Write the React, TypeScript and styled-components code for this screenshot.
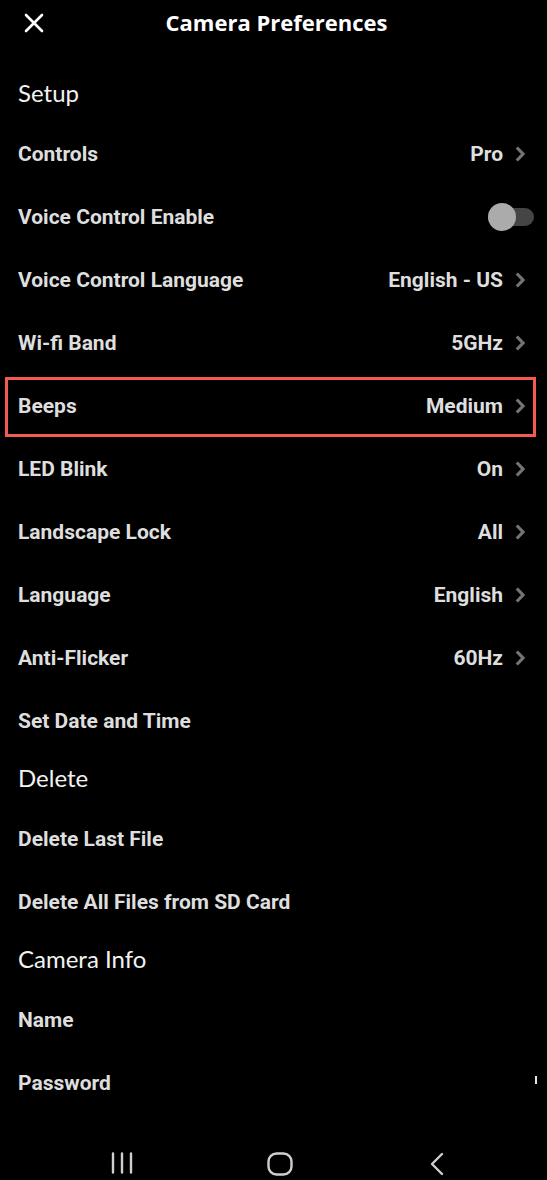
import React from "react";
import styled, { createGlobalStyle } from "styled-components";

const GlobalStyle = createGlobalStyle`
  html, body {
    margin: 0;
    padding: 0;
    background: #000;
  }
  * {
    box-sizing: border-box;
  }
`;

const Screen = styled.div`
  width: 547px;
  height: 1180px;
  background: #000;
  display: flex;
  flex-direction: column;
  overflow: hidden;
`;

const TopBar = styled.header`
  height: 45px;
  display: grid;
  grid-template-columns: 60px 1fr 60px;
  align-items: center;
`;

const CloseButton = styled.button`
  border: none;
  background: none;
  padding: 0 0 0 24px;
  height: 45px;
  display: flex;
  align-items: center;
  cursor: pointer;
`;

const Title = styled.h1`
  margin: 0;
  text-align: center;
  color: #fff;
  font-family: "Open Sans", Lato, sans-serif;
  font-weight: 700;
  font-size: 22px;
  padding-left: 6px;
  padding-bottom: 2px;
`;

const List = styled.div`
  padding-top: 22.5px;
  display: flex;
  flex-direction: column;
`;

const SectionHeader = styled.div`
  height: 55px;
  padding: 10px 18px 0;
  color: #f2f2f2;
  font-family: Lato, "Noto Sans", sans-serif;
  font-size: 24px;
  line-height: 30px;
`;

const Row = styled.div<{ $highlight?: boolean }>`
  position: relative;
  height: 63px;
  padding: 0 22px 0 18px;
  display: flex;
  align-items: center;
  justify-content: space-between;
  font-family: Roboto, "Liberation Sans", sans-serif;
  font-weight: 700;
  font-size: 21px;
  color: #dedede;

  ${(p) =>
    p.$highlight &&
    `
    &::after {
      content: "";
      position: absolute;
      top: 2.5px;
      left: 5px;
      right: 11px;
      bottom: 0.5px;
      border: 3px solid #f45b50;
      pointer-events: none;
    }
  `}
`;

const Value = styled.div`
  display: flex;
  align-items: center;
  gap: 12px;
`;

const Chevron = () => (
  <svg width="10" height="16" viewBox="0 0 10 16">
    <path
      d="M1.8 1.5 L8 8 L1.8 14.5"
      fill="none"
      stroke="#747474"
      strokeWidth="3.2"
    />
  </svg>
);

const Track = styled.div`
  position: relative;
  width: 46px;
  height: 18px;
  border-radius: 9px;
  background: #454545;
  margin-right: -9px;
`;

const Knob = styled.div`
  position: absolute;
  left: 0;
  top: -5px;
  width: 28px;
  height: 28px;
  border-radius: 50%;
  background: #ababab;
`;

const Cursor = styled.div`
  width: 2px;
  height: 8px;
  background: #e6e6e6;
  margin-right: -12px;
  margin-top: -6px;
`;

const NavBar = styled.nav`
  margin-top: auto;
  height: 28px;
  display: flex;
  align-items: flex-start;
`;

const NavSlot = styled.div<{ $x: number }>`
  width: ${(p) => p.$x}px;
  display: flex;
  justify-content: flex-end;
`;

type Item = {
  label: string;
  value?: string;
  toggle?: boolean;
  cursor?: boolean;
  highlight?: boolean;
};

const sections: { title: string; items: Item[] }[] = [
  {
    title: "Setup",
    items: [
      { label: "Controls", value: "Pro" },
      { label: "Voice Control Enable", toggle: true },
      { label: "Voice Control Language", value: "English - US" },
      { label: "Wi-fi Band", value: "5GHz" },
      { label: "Beeps", value: "Medium", highlight: true },
      { label: "LED Blink", value: "On" },
      { label: "Landscape Lock", value: "All" },
      { label: "Language", value: "English" },
      { label: "Anti-Flicker", value: "60Hz" },
      { label: "Set Date and Time" },
    ],
  },
  {
    title: "Delete",
    items: [
      { label: "Delete Last File" },
      { label: "Delete All Files from SD Card" },
    ],
  },
  {
    title: "Camera Info",
    items: [{ label: "Name" }, { label: "Password", cursor: true }],
  },
];

const SettingRow = ({ item }: { item: Item }) => (
  <Row $highlight={item.highlight}>
    <span>{item.label}</span>
    {item.value && (
      <Value>
        <span>{item.value}</span>
        <Chevron />
      </Value>
    )}
    {item.toggle && (
      <Track>
        <Knob />
      </Track>
    )}
    {item.cursor && <Cursor />}
  </Row>
);

export default function App() {
  return (
    <>
      <GlobalStyle />
      <Screen>
        <TopBar>
          <CloseButton aria-label="Close">
            <svg width="20" height="20" viewBox="0 0 20 20">
              <path
                d="M2 2 L18 18 M18 2 L2 18"
                stroke="#fff"
                strokeWidth="2.6"
                strokeLinecap="round"
              />
            </svg>
          </CloseButton>
          <Title>Camera Preferences</Title>
          <div />
        </TopBar>
        <List>
          {sections.map((s) => (
            <React.Fragment key={s.title}>
              <SectionHeader>{s.title}</SectionHeader>
              {s.items.map((it) => (
                <SettingRow key={it.label} item={it} />
              ))}
            </React.Fragment>
          ))}
        </List>
        <NavBar>
          <NavSlot $x={134}>
            <svg width="24" height="22" viewBox="0 0 24 22">
              <path
                d="M3 1.5 V20.5 M12 1.5 V20.5 M21 1.5 V20.5"
                stroke="#cfcfcf"
                strokeWidth="2.4"
                strokeLinecap="round"
              />
            </svg>
          </NavSlot>
          <NavSlot $x={159}>
            <svg width="26" height="24" viewBox="0 0 26 24">
              <rect
                x="1.5"
                y="1.5"
                width="23"
                height="21"
                rx="8"
                fill="none"
                stroke="#cfcfcf"
                strokeWidth="2.4"
              />
            </svg>
          </NavSlot>
          <NavSlot $x={151}>
            <svg width="14" height="24" viewBox="0 0 14 24">
              <path
                d="M12 2 L2 12 L12 22"
                fill="none"
                stroke="#cfcfcf"
                strokeWidth="2.4"
                strokeLinecap="round"
                strokeLinejoin="round"
              />
            </svg>
          </NavSlot>
        </NavBar>
      </Screen>
    </>
  );
}
